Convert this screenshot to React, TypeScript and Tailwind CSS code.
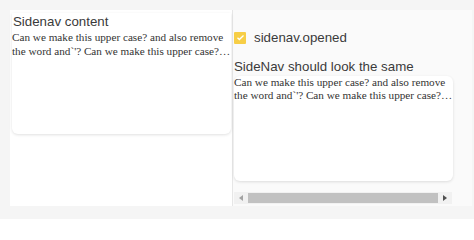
const LOREM =
  "Can we make this upper case? and also remove the word and`'? Can we make this upper case? and also remove the word and`'?"

function Card({ className, children }: { className?: string; children: React.ReactNode }) {
  return <div className={`bg-white shadow-[0_1px_3px_rgba(0,0,0,0.12)] ${className ?? ''}`}>{children}</div>
}

function Blurb() {
  return (
    <p className="line-clamp-2 font-['Liberation_Serif',serif] text-[11.2px] leading-[13.3px] text-[#333]">{LOREM}</p>
  )
}

function Scrollbar() {
  return (
    <div className="mt-[11px] flex h-[12px] w-[218px] items-center bg-[#f1f1f1]">
      <div className="flex w-[14px] justify-center">
        <div className="h-0 w-0 border-y-[3px] border-r-[4px] border-y-transparent border-r-[#a3a3a3]" />
      </div>
      <div className="h-[10px] w-[190px] bg-[#c1c1c1]" />
      <div className="flex w-[14px] justify-center">
        <div className="h-0 w-0 border-y-[3px] border-l-[4px] border-y-transparent border-l-[#505050]" />
      </div>
    </div>
  )
}

export default function App() {
  return (
    <div className="h-[219px] w-[474px] bg-[#f5f5f5] pl-[10px] pt-[10px] font-['Liberation_Sans',Arial,sans-serif] text-[13.3px] text-[#3a3a3a]">
      <div className="flex h-[196px] w-[462px] bg-[#fafafa]">
        {/* sidenav */}
        <aside className="h-full w-[223px] border-r border-[#e6e6e6] bg-white pl-[2px] pt-[3px]">
          <Card className="h-[121px] w-[219px] rounded-b-[6px]">
            <h3 className="pl-[1px] pt-[1px] leading-[15.3px]">Sidenav content</h3>
            <div className="mt-[2px]">
              <Blurb />
            </div>
          </Card>
        </aside>

        {/* content */}
        <main className="pl-[1px]">
          <label className="mt-[20px] flex items-center">
            <span className="flex h-[12px] w-[12px] items-center justify-center rounded-[1px] bg-[#f7ce46]">
              <svg width="9" height="9" viewBox="0 0 24 24" fill="none" stroke="white" strokeWidth="3.5">
                <path d="M4 12.5l5 5L20 6.5" />
              </svg>
            </span>
            <span className="ml-[8px] leading-[15.3px]">sidenav.opened</span>
          </label>
          <h3 className="mt-[14px] leading-[15.3px]">SideNav should look the same</h3>
          <Card className="mt-px h-[105px] w-[219px] rounded-[6px]">
            <Blurb />
          </Card>
          <Scrollbar />
        </main>
      </div>
    </div>
  )
}
